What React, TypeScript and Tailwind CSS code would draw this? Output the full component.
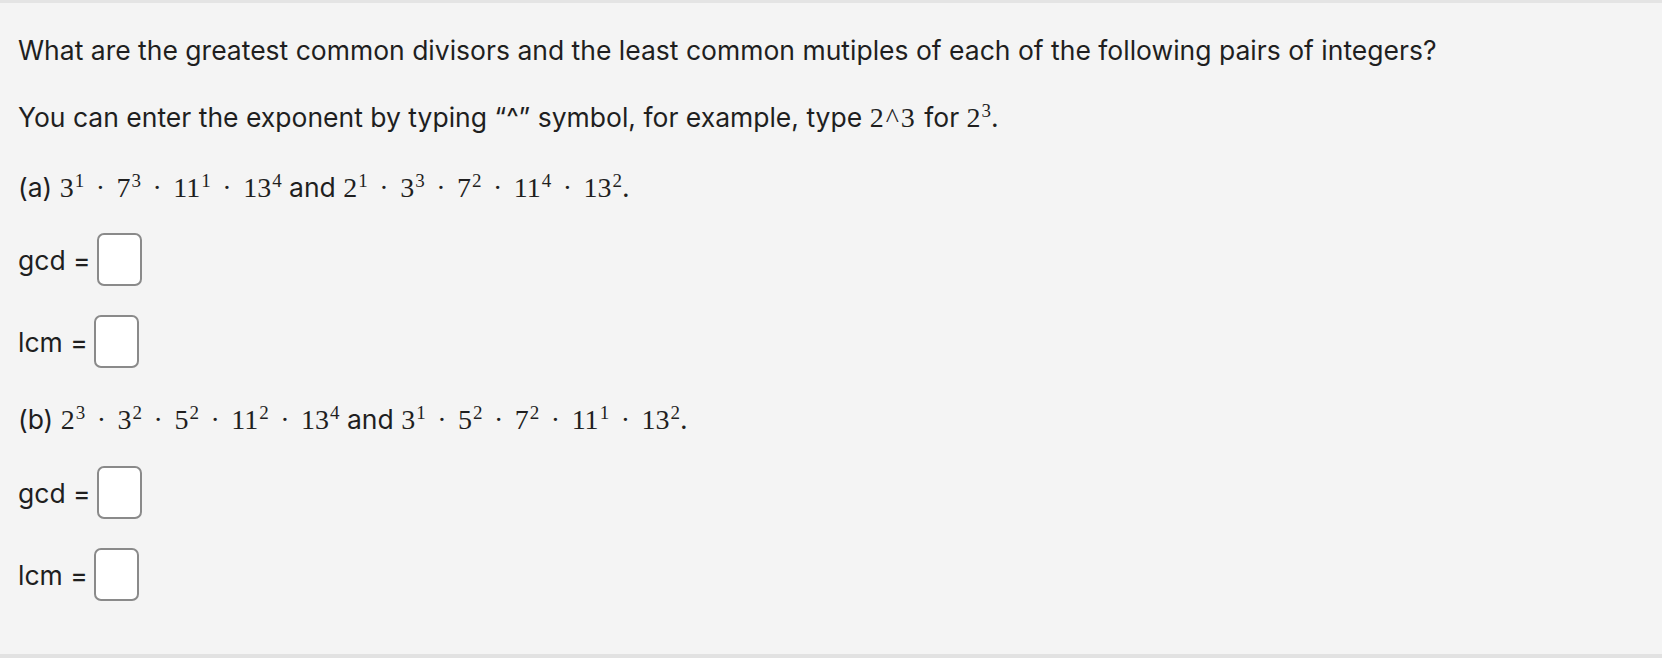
import React from 'react';

type Term = [string, string];

const partA1: Term[] = [['3', '1'], ['7', '3'], ['11', '1'], ['13', '4']];
const partA2: Term[] = [['2', '1'], ['3', '3'], ['7', '2'], ['11', '4'], ['13', '2']];
const partB1: Term[] = [['2', '3'], ['3', '2'], ['5', '2'], ['11', '2'], ['13', '4']];
const partB2: Term[] = [['3', '1'], ['5', '2'], ['7', '2'], ['11', '1'], ['13', '2']];

function Pow({ base, exp }: { base: string; exp: string }) {
  return (
    <span className="font-['Liberation_Serif',serif] text-[28px] leading-none">
      {base}
      <sup className="text-[19px] top-[-10px] ml-[1px]">{exp}</sup>
    </span>
  );
}

function Product({ terms }: { terms: Term[] }) {
  return (
    <span className="leading-none">
      {terms.map((t, i) => (
        <React.Fragment key={i}>
          {i > 0 && <span className="font-['Liberation_Serif',serif] text-[28px] leading-none mx-[11.5px]">·</span>}
          <Pow base={t[0]} exp={t[1]} />
        </React.Fragment>
      ))}
    </span>
  );
}

function AnswerRow({ label }: { label: string }) {
  return (
    <div className="flex items-center h-[53px]">
      <span>{label} =</span>
      <input
        type="text"
        className="ml-[6px] w-[45px] h-[53px] bg-white border-2 border-[#8a8a8a] rounded-[7px] outline-none"
      />
    </div>
  );
}

export default function App() {
  return (
    <div className="w-full h-[658px] bg-[#f4f4f4] border-t-[3px] border-t-[#e4e4e4] border-b-[4px] border-b-[#e2e2e2] pl-[18px] pt-[29px] text-[#1f1f1f] text-[26.5px] leading-[36px] font-['Inter','Noto_Sans',sans-serif]">
      <p>
        What are the greatest common divisors and the least common mutiples of each of the following pairs of integers?
      </p>
      <p className="mt-[31px]">
        You can enter the exponent by typing “^” symbol, for example, type{' '}
        <span className="font-['Liberation_Serif',serif] text-[28px] leading-none tracking-[2px]">2^3</span> for{' '}
        <Pow base="2" exp="3" />.
      </p>

      {/* part (a) */}
      <p className="mt-[34px]">
        (a) <Product terms={partA1} /> and <Product terms={partA2} />.
      </p>
      <div className="mt-[28px]">
        <AnswerRow label="gcd" />
      </div>
      <div className="mt-[29px]">
        <AnswerRow label="lcm" />
      </div>

      {/* part (b) */}
      <p className="mt-[33px]">
        (b) <Product terms={partB1} /> and <Product terms={partB2} />.
      </p>
      <div className="mt-[29px]">
        <AnswerRow label="gcd" />
      </div>
      <div className="mt-[29px]">
        <AnswerRow label="lcm" />
      </div>
    </div>
  );
}
